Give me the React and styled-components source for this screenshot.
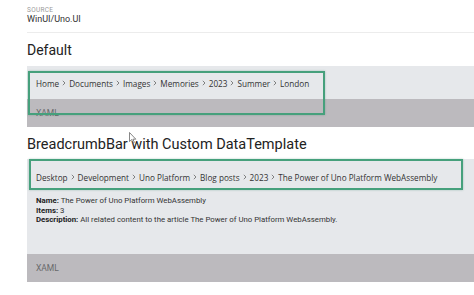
import styled, { createGlobalStyle } from "styled-components";

const Global = createGlobalStyle`
  body { margin: 0; background: #fff; font-family: Roboto, "Liberation Sans", sans-serif; }
`;

const Page = styled.div`
  position: relative;
  width: 474px;
  height: 295px;
  overflow: hidden;
  padding-left: 27px;
  box-sizing: border-box;
`;

const Source = styled.div`
  padding-top: 6px;
  height: 33px;
  box-sizing: border-box;
  border-bottom: 1px solid #ececec;
  .label { font-size: 6.5px; color: #9a9a9a; letter-spacing: 0.3px; line-height: 8px; }
  .value { font-size: 9px; color: #333; line-height: 10px; }
`;

const Heading = styled.h2`
  margin: 0;
  font-weight: 400;
  font-size: ${(p) => p.size || 14}px;
  color: #222;
  height: ${(p) => p.h}px;
  padding-top: ${(p) => p.pt || 0}px;
  box-sizing: border-box;
  display: flex;
  align-items: center;
`;

const Panel = styled.div`
  position: relative;
  background: #e6e8eb;
`;

const Body = styled.div`
  height: ${(p) => p.h}px;
  padding: ${(p) => p.pad};
  box-sizing: border-box;
`;

const XamlBar = styled.div`
  height: 28px;
  background: #bcbabe;
  color: #69696b;
  font-size: 8.5px;
  display: flex;
  align-items: center;
  padding-left: 9px;
`;

const Crumbs = styled.div`
  display: flex;
  align-items: center;
  gap: ${(p) => p.gap}px;
  font-family: "Open Sans", "Noto Sans", sans-serif;
  font-size: ${(p) => p.size}px;
  color: #333;
  height: 18px;
  white-space: nowrap;
`;

const Highlight = styled.div`
  position: absolute;
  left: ${(p) => p.x}px;
  top: ${(p) => p.y}px;
  width: ${(p) => p.w}px;
  height: ${(p) => p.h}px;
  border: 2px solid #46a07c;
  box-sizing: border-box;
  box-shadow: 0 0 2px rgba(40, 120, 90, 0.35);
`;

const Details = styled.div`
  margin-top: 10px;
  font-size: 7.8px;
  line-height: 9.6px;
  color: #333;
  b { font-weight: 700; color: #222; }
`;

const Cursor = styled.svg`
  position: absolute;
  left: 129px;
  top: 132px;
`;

const Chevron = () => (
  <svg width="4" height="6" viewBox="0 0 4 6">
    <path d="M0.8 0.8 L3 3 L0.8 5.2" fill="none" stroke="#666" strokeWidth="0.8" />
  </svg>
);

function Breadcrumb({ items, size, gap }) {
  return (
    <Crumbs size={size} gap={gap}>
      {items.map((it, i) => (
        <span key={i} style={{ display: "contents" }}>
          {i > 0 && <Chevron />}
          <span>{it}</span>
        </span>
      ))}
    </Crumbs>
  );
}

export default function App() {
  return (
    <Page>
      <Global />
      <Source>
        <div className="label">SOURCE</div>
        <div className="value">WinUI/Uno.UI</div>
      </Source>
      <Heading h={33}>Default</Heading>
      <Panel>
        <Body h={33} pad="8px 0 0 9px">
          <Breadcrumb
            size={8.2}
            gap={3}
            items={["Home", "Documents", "Images", "Memories", "2023", "Summer", "London"]}
          />
        </Body>
        <XamlBar>XAML</XamlBar>
        <Highlight x={1} y={5} w={297} h={44} />
      </Panel>
      <Heading h={32} pt={2} size={14.5}>BreadcrumbBar with Custom DataTemplate</Heading>
      <Panel>
        <Body h={95} pad="9px 0 0 9px">
          <Breadcrumb
            size={8.2}
            gap={3}
            items={[
              "Desktop",
              "Development",
              "Uno Platform",
              "Blog posts",
              "2023",
              "The Power of Uno Platform WebAssembly",
            ]}
          />
          <Details>
            <div><b>Name:</b> The Power of Uno Platform WebAssembly</div>
            <div><b>Items:</b> 3</div>
            <div><b>Description:</b> All related content to the article The Power of Uno Platform WebAssembly.</div>
          </Details>
        </Body>
        <XamlBar>XAML</XamlBar>
        <Highlight x={2} y={0} w={434} h={31} />
      </Panel>
      <Cursor width="8" height="12" viewBox="0 0 8 12">
        <path d="M0.5 0.5 L0.5 9.5 L2.6 7.6 L4.2 11 L5.4 10.4 L3.9 7.2 L6.8 7.2 Z" fill="#fff" stroke="#555" strokeWidth="0.7" />
      </Cursor>
    </Page>
  );
}
